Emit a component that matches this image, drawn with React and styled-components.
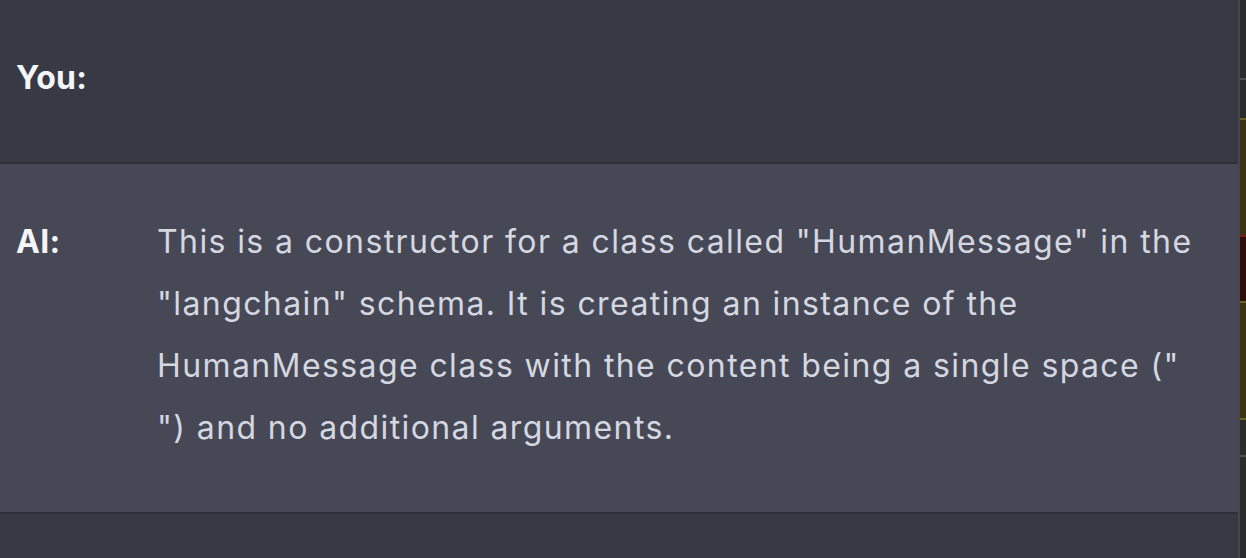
import React from 'react'
import styled, { createGlobalStyle } from 'styled-components';

const GlobalStyle = createGlobalStyle`
  html, body {
    margin: 0;
    padding: 0;
    background: #373a44;
    overflow: hidden;
  }
  #root {
    height: 558px;
  }
`;

const messages = [
  { role: 'You', text: '', human: true },
  {
    role: 'AI',
    text: 'This is a constructor for a class called "HumanMessage" in the "langchain" schema. It is creating an instance of the HumanMessage class with the content being a single space (" ") and no additional arguments.',
  },
];

// overview ruler marks on the right edge
const marks = [
  { h: 78, bg: '#2b2b2c' },
  { h: 2, bg: '#4d4d50' },
  { h: 38, bg: '#2b2b2c' },
  { h: 2, bg: '#6e621f' },
  { h: 115, bg: '#3a3416' },
  { h: 2, bg: '#7c1b12' },
  { h: 64, bg: '#2f0e09' },
  { h: 2, bg: '#6e621f' },
  { h: 115, bg: '#3a3416' },
  { h: 2, bg: '#6e621f' },
  { h: 35, bg: '#2b2b2c' },
  { h: 2, bg: '#4d4d50' },
  { h: 101, bg: '#2b2b2c' },
];

const App = () => {
  return (
    <Page>
      <GlobalStyle />
      <Chat>
        {messages.map((m, i) => (
          <Row key={i} human={m.human}>
            <Label>{m.role}:</Label>
            <Body>{m.text}</Body>
          </Row>
        ))}
        <Rest />
      </Chat>
      <Gutter />
      <Ruler>
        {marks.map((mk, i) => (
          <Mark key={i} style={{ height: mk.h, background: mk.bg }} />
        ))}
      </Ruler>
    </Page>
  )
}

const Page = styled.div`
  display: flex;
  width: 1246px;
  height: 558px;
  font-family: Inter, "Noto Sans", sans-serif;
`;

const Chat = styled.div`
  flex: 1;
  display: flex;
  flex-direction: column;
  background: #373a44;
`;

const Row = styled.div`
  display: grid;
  grid-template-columns: 141px 1fr;
  padding: 47px 30px 53px 16px;
  background: ${p => (p.human ? '#373a44' : '#464855')};
  border-bottom: 2px solid #2e3039;
  min-height: 62px;
`;

const Label = styled.div`
  font-size: 32px;
  line-height: 62px;
  font-weight: 700;
  letter-spacing: 0.3px;
  color: #f4f5f8;
`;

const Body = styled.div`
  font-size: 32px;
  line-height: 62px;
  letter-spacing: 1.4px;
  color: #d5d7e0;
`;

const Rest = styled.div`
  flex: 1;
`;

const Gutter = styled.div`
  width: 2px;
  background: #46474c;
`;

const Ruler = styled.div`
  width: 6px;
  display: flex;
  flex-direction: column;
`;

const Mark = styled.div`
  flex-shrink: 0;
`;

export default App;
